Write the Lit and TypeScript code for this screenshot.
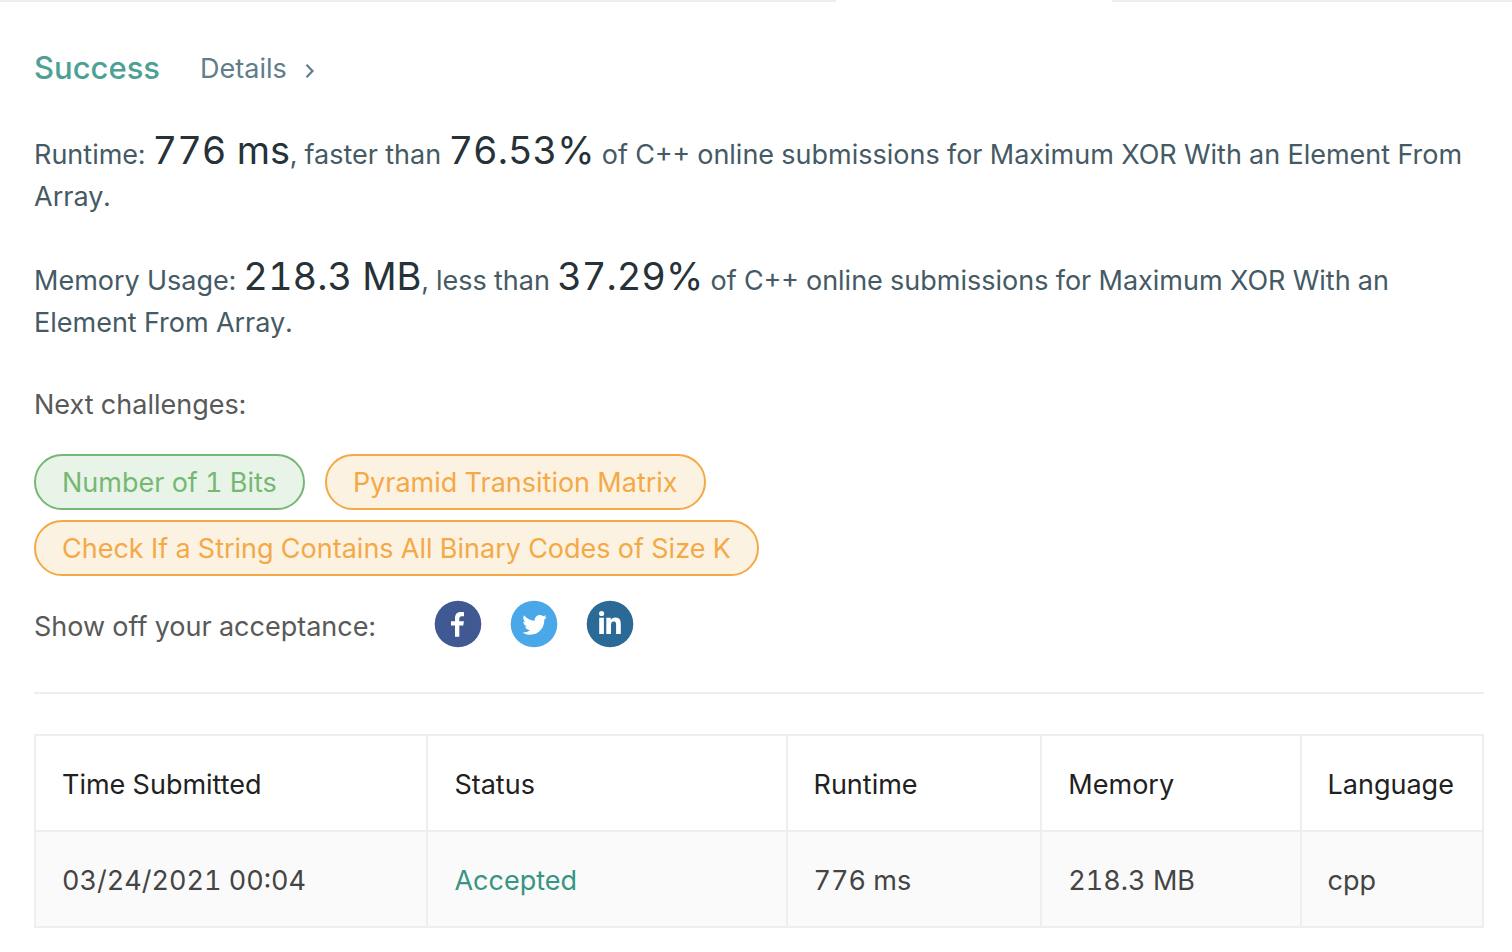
import { LitElement, html, css } from "lit";
import { customElement } from "lit/decorators.js";

const challenges = [
  { name: "Number of 1 Bits", level: "easy" },
  { name: "Pyramid Transition Matrix", level: "medium" },
  { name: "Check If a String Contains All Binary Codes of Size K", level: "medium" },
];

const columns = ["Time Submitted", "Status", "Runtime", "Memory", "Language"];

@customElement("app-root")
export class AppRoot extends LitElement {
  static styles = css`
    :host { display: block; background: #fff; color: #455a64; font-family: Inter, "Liberation Sans", sans-serif; font-size: 27px; line-height: 42px; font-variant-numeric: tabular-nums; }
    * { box-sizing: border-box; }
    a { color: inherit; text-decoration: none; }
    .tabline { display: grid; grid-template-columns: 836fr 276fr 400fr; height: 2px; }
    .rule { background: #eee; }
    main { padding: 44px 28px 24px 34px; }
    .head { display: flex; align-items: center; gap: 40px; }
    h1 { margin: 0; font-size: 31px; font-weight: 500; color: #4da194; }
    .details { display: flex; align-items: center; gap: 18px; padding-top: 2px; color: #607d8b; }
    .chevron { width: 10px; height: 16px; margin-top: 4px; }
    p { margin: 0; }
    .stats { margin-top: 44px; display: grid; gap: 42px; }
    .big { font-size: 38px; line-height: 32px; color: #263238; }
    .next { margin-top: 40px; color: #595959; }
    .tags { margin-top: 28px; display: flex; flex-wrap: wrap; gap: 10px 20px; max-width: 760px; }
    .tag { height: 56px; padding: 0 26px; border: 2px solid; border-radius: 28px; line-height: 54px; }
    .easy { color: #76b873; border-color: #76b873; background: #e9f4e8; }
    .medium { color: #f4a947; border-color: #f4a947; background: #fcf2e2; }
    .share { margin-top: 24px; display: flex; align-items: center; color: #595959; }
    .label { padding-top: 6px; }
    .icons { display: flex; gap: 28px; margin-left: 58px; }
    .icons a { display: block; height: 48px; }
    .icons svg { width: 48px; height: 48px; display: block; }
    hr { height: 2px; border: 0; background: #eee; margin: 44px 0 40px; }
    table { width: 100%; border-collapse: collapse; table-layout: fixed; color: #444; }
    th, td { border: 2px solid #eee; height: 96px; padding: 4px 26px 0; text-align: left; font-weight: 400; white-space: nowrap; }
    th { color: #212121; }
    td { background: #fafafa; }
    .c0 { width: 27.1%; } .c1 { width: 24.8%; } .c2 { width: 17.6%; } .c3 { width: 17.9%; }
    .accepted { color: #389483; }
  `;

  render() {
    return html`
      <div class="tabline"><div class="rule"></div><div></div><div class="rule"></div></div>
      <main>
        <div class="head">
          <h1>Success</h1>
          <a class="details" href="#details">Details
            <svg class="chevron" viewBox="0 0 10 16" fill="none" stroke="currentColor" stroke-width="2.200"><path d="M1.500 1.700l6 6.300-6 6.300" /></svg>
          </a>
        </div>
        <div class="stats">
          <p>Runtime: <span class="big">776 ms</span>, faster than <span class="big">76.53%</span> of C++ online submissions for Maximum XOR With an Element From Array.</p>
          <p>Memory Usage: <span class="big">218.3 MB</span>, less than <span class="big">37.29%</span> of C++ online submissions for Maximum XOR With an Element From Array.</p>
        </div>
        <p class="next">Next challenges:</p>
        <div class="tags">${challenges.map((c) => html`<a class="tag ${c.level}" href="#challenge">${c.name}</a>`)}</div>
        <div class="share">
          <span class="label">Show off your acceptance:</span>
          <div class="icons">
            <a href="#facebook" aria-label="Facebook"><svg viewBox="0 0 48 48"><circle cx="24" cy="24" r="23.300" fill="#405993" /><path fill="#fff" d="M21 36.800V25.500h-4v-4.300h4v-3.100c0-4 2.300-6.100 5.900-6.100 1.700 0 3.100.2 3.100.2v4h-2c-2.200 0-2.700 1-2.700 2.500v2.500h4.600l-.6 4.300h-4v11.300z" /></svg></a>
            <a href="#twitter" aria-label="Twitter"><svg viewBox="0 0 48 48"><circle cx="24" cy="24" r="23.300" fill="#4aa7e8" /><path fill="#fff" transform="translate(12.500 13.500)" d="M24.200 3.400 22.300 3.900 23.500 1.800 20.700 2.700C19.700 1.900 18.600 1.500 17.300 1.500 14.300 1.500 12 4 12.200 7.200 8.200 7.100 4.200 5.100 1.500 1.800.1 4.300.8 7 3 8.600L.8 8c0 2.400 1.600 4.500 4 5l-2.200.1c.6 2 2.400 3.500 4.700 3.600C5.200 18.400 2.600 19.200 0 18.900c2.300 1.500 5 2.300 7.800 2.300 9 0 14-7.400 14-14.400v-.7c1-.7 1.800-1.600 2.400-2.700z" /></svg></a>
            <a href="#linkedin" aria-label="LinkedIn"><svg viewBox="0 0 48 48"><circle cx="24" cy="24" r="23.300" fill="#2b6997" /><g fill="#fff"><circle cx="15.600" cy="13.500" r="2.600" /><path d="M13.200 17.800h4.700v16.200h-4.700zM20.300 17.800h4.500v2.100c.8-1.400 2.300-2.400 4.500-2.400 4.700 0 5.500 3 5.500 7V34h-4.700v-8.400c0-2 0-4-2.400-4s-2.700 1.900-2.700 3.800V34h-4.700z" /></g></svg></a>
          </div>
        </div>
        <hr />
        <table>
          <thead><tr>${columns.map((c, i) => html`<th class="c${i}" scope="col">${c}</th>`)}</tr></thead>
          <tbody><tr><td>03/24/2021 00:04</td><td><a class="accepted" href="#submission">Accepted</a></td><td>776 ms</td><td>218.3 MB</td><td>cpp</td></tr></tbody>
        </table>
      </main>
    `;
  }
}
